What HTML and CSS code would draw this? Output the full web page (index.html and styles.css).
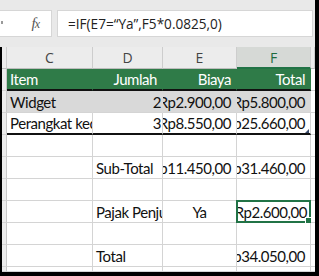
FILE: index.html
```html
<!DOCTYPE html>
<html>
<head>
<meta charset="utf-8">
<link rel="stylesheet" href="styles.css">
</head>
<body>
<div class="frame">
  <div class="fbar">
    <div class="namebox"><span class="tick"></span><span class="fx">f<i>x</i></span></div>
    <div class="formula">=IF(E7=“Ya”,F5*0.0825,0)</div>
  </div>
  <div class="sheet">
    <div class="row colhead">
      <div class="c rh"></div>
      <div class="c">C</div>
      <div class="c">D</div>
      <div class="c">E</div>
      <div class="c sel">F</div>
      <div class="c last"></div>
    </div>
    <div class="row thead">
      <div class="c rh"></div>
      <div class="c l">Item</div>
      <div class="c r">Jumlah</div>
      <div class="c r">Biaya</div>
      <div class="c r">Total</div>
      <div class="c last"></div>
    </div>
    <div class="row band">
      <div class="c rh"></div>
      <div class="c l">Widget</div>
      <div class="c r tight">2</div>
      <div class="c r">Rp2.900,00</div>
      <div class="c r">Rp5.800,00</div>
      <div class="c last"></div>
    </div>
    <div class="row tend">
      <div class="c rh"></div>
      <div class="c l">Perangkat kecil</div>
      <div class="c r tight">3</div>
      <div class="c r">Rp8.550,00</div>
      <div class="c r resize">Rp25.660,00<span class="handle"></span></div>
      <div class="c last"></div>
    </div>
    <div class="row">
      <div class="c rh"></div><div class="c"></div><div class="c"></div><div class="c"></div><div class="c"></div><div class="c last"></div>
    </div>
    <div class="row">
      <div class="c rh"></div>
      <div class="c"></div>
      <div class="c l">Sub-Total</div>
      <div class="c r">Rp11.450,00</div>
      <div class="c r">Rp31.460,00</div>
      <div class="c last"></div>
    </div>
    <div class="row">
      <div class="c rh"></div><div class="c"></div><div class="c"></div><div class="c"></div><div class="c"></div><div class="c last"></div>
    </div>
    <div class="row">
      <div class="c rh"></div>
      <div class="c"></div>
      <div class="c l">Pajak Penjualan</div>
      <div class="c ctr">Ya</div>
      <div class="c active"><span class="val">Rp2.600,00</span><span class="fill"></span></div>
      <div class="c last"></div>
    </div>
    <div class="row">
      <div class="c rh"></div><div class="c"></div><div class="c"></div><div class="c"></div><div class="c"></div><div class="c last"></div>
    </div>
    <div class="row">
      <div class="c rh"></div>
      <div class="c"></div>
      <div class="c l">Total</div>
      <div class="c"></div>
      <div class="c r">Rp34.050,00</div>
      <div class="c last"></div>
    </div>
    <div class="row stub">
      <div class="c rh"></div><div class="c"></div><div class="c"></div><div class="c"></div><div class="c"></div><div class="c last"></div>
    </div>
  </div>
</div>
</body>
</html>
```

FILE: styles.css
```css
html, body {
  margin: 0;
  padding: 0;
  background: #000;
}
.frame {
  width: 319px;
  height: 276px;
  background: #000;
  overflow: hidden;
}
.fbar {
  height: 47px;
  width: 315px;
  background: #e9e9e9;
  box-sizing: border-box;
  padding: 10px 2px 10px 0;
  display: flex;
  gap: 5px;
}
.namebox {
  width: 52px;
  background: #fff;
  border: 1px solid #d6d6d6;
  border-left: none;
  box-sizing: border-box;
  display: flex;
  align-items: center;
  justify-content: flex-end;
  padding-right: 12px;
  position: relative;
}
.tick {
  position: absolute;
  left: 1px;
  top: 10px;
  width: 2px;
  height: 3px;
  background: #9a9a9a;
}
.fx {
  font-family: "Liberation Serif", serif;
  font-style: italic;
  font-size: 15px;
  color: #555;
  letter-spacing: -1px;
}
.fx i {
  font-size: 12px;
}
.formula {
  flex: 1;
  background: #fff;
  border: 1px solid #d6d6d6;
  box-sizing: border-box;
  font-family: "Open Sans", sans-serif;
  font-size: 13.6px;
  color: #222;
  display: flex;
  align-items: center;
  padding-left: 10px;
  white-space: nowrap;
}
.sheet {
  margin-left: 2px;
  width: 313px;
  background: #fff;
}
.row {
  display: grid;
  grid-template-columns: 5px 86px 70px 74px 74px 4px;
  height: 22px;
}
.c {
  box-sizing: border-box;
  border-right: 1px solid #d4d4d4;
  border-bottom: 1px solid #d4d4d4;
  overflow: hidden;
  white-space: nowrap;
  font-family: Lato, "Carlito", sans-serif;
  font-size: 15px;
  letter-spacing: -0.45px;
  color: #111;
  display: flex;
  align-items: center;
  position: relative;
}
.c.last {
  border-right: none;
}
.c.rh {
  background: #ececec;
  border-right: 1px solid #c8c8c8;
}
.c.l {
  padding-left: 3px;
}
.c.r {
  justify-content: flex-end;
  padding-right: 5px;
}
.c.r.tight {
  padding-right: 1px;
}
.c.ctr {
  justify-content: center;
}
.colhead .c {
  background: #ececec;
  border-right: 1px solid #cdcdcd;
  border-bottom: 1px solid #bdbdbd;
  justify-content: center;
  font-family: "Open Sans", sans-serif;
  font-size: 14px;
  letter-spacing: 0;
  color: #444;
}
.colhead .c.sel {
  background: #d6d9d6;
  color: #1e6b3e;
  border-bottom: 2px solid #217346;
}
.thead .c:not(.rh):not(.last) {
  background: #2f7b48;
  color: #fff;
  border-right-color: #2f7b48;
  border-bottom: 2px solid #111;
}
.band .c:not(.rh):not(.last) {
  background: #d9d9d9;
  border-right-color: #d9d9d9;
}
.tend .c:not(.rh):not(.last) {
  border-bottom: 2px solid #111;
}
.stub {
  height: 5px;
}
.handle {
  position: absolute;
  right: 1px;
  bottom: 0;
  width: 0;
  height: 0;
  border-left: 4px solid transparent;
  border-bottom: 4px solid #3a4a6a;
}
.active {
  overflow: visible;
  border: 2px solid #217346;
  margin: -1px 0 0 -1px;
  height: 23px;
}
.val {
  flex: 1;
  overflow: hidden;
  display: flex;
  justify-content: flex-end;
  padding-right: 2px;
}
.fill {
  position: absolute;
  right: -3px;
  bottom: -3px;
  width: 5px;
  height: 5px;
  background: #217346;
  border: 1px solid #fff;
}
```
